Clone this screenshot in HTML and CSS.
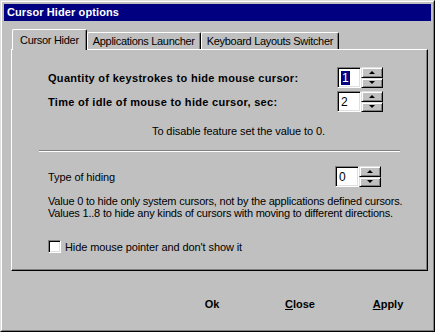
FILE: index.html
```html
<!DOCTYPE html>
<html lang="en">
<head>
  <meta charset="UTF-8">
  <meta name="viewport" content="width=device-width, initial-scale=1.0">
  <title>Cursor Hider options</title>
  <link rel="stylesheet" href="styles.css">
</head>
<body>
  <div class="window">
    <div class="frame">
      <div class="titlebar">Cursor Hider options</div>

      <div class="tabs">
        <div class="tab active">Cursor Hider</div>
        <div class="tab">Applications Launcher</div>
        <div class="tab">Keyboard Layouts Switcher</div>
      </div>

      <div class="panel">
        <div class="row bold">
          <span class="label">Quantity of keystrokes to hide mouse cursor:</span>
          <div class="spinner">
            <div class="edit"><span class="selected">1</span></div>
            <div class="spin">
              <div class="spin-btn"><span class="arrow up"></span></div>
              <div class="spin-btn"><span class="arrow down"></span></div>
            </div>
          </div>
        </div>
        <div class="row bold second">
          <span class="label">Time of idle of mouse to hide cursor, sec:</span>
          <div class="spinner">
            <div class="edit">2</div>
            <div class="spin">
              <div class="spin-btn"><span class="arrow up"></span></div>
              <div class="spin-btn"><span class="arrow down"></span></div>
            </div>
          </div>
        </div>

        <div class="note">To disable feature set the value to 0.</div>

        <div class="separator"></div>

        <div class="row type-row">
          <span class="label">Type of hiding</span>
          <div class="spinner shifted">
            <div class="edit">0</div>
            <div class="spin">
              <div class="spin-btn"><span class="arrow up"></span></div>
              <div class="spin-btn"><span class="arrow down"></span></div>
            </div>
          </div>
        </div>

        <div class="description">
          Value 0 to hide only system cursors, not by the applications defined cursors.<br>
          Values 1..8 to hide any kinds of cursors with moving to different directions.
        </div>

        <label class="check-row">
          <span class="checkbox"></span>
          <span>Hide mouse pointer and don't show it</span>
        </label>
      </div>

      <div class="buttons">
        <button class="btn">Ok</button>
        <button class="btn"><u>C</u>lose</button>
        <button class="btn"><u>A</u>pply</button>
      </div>
    </div>
  </div>
</body>
</html>
```

FILE: styles.css
```css
body {
  margin: 0;
  background: #c0c0c0;
  font-family: "Liberation Sans", Arial, sans-serif;
  font-size: 11px;
  color: #000;
}

.window {
  width: 435px;
  height: 332px;
  box-sizing: border-box;
  border: 1px solid;
  border-color: #dfdfdf #000 #000 #dfdfdf;
  background: #c0c0c0;
}

.frame {
  height: 100%;
  box-sizing: border-box;
  border: 1px solid;
  border-color: #fff #808080 #808080 #fff;
  padding: 2px;
  display: flex;
  flex-direction: column;
}

.titlebar {
  height: 17px;
  line-height: 17px;
  padding-left: 3px;
  background: #000080;
  color: #fff;
  font-weight: bold;
  letter-spacing: 0.1px;
}

/* tabs */
.tabs {
  display: flex;
  align-items: flex-end;
  height: 20px;
  margin: 8px 0 0 8px;
  position: relative;
  z-index: 1;
}

.tab {
  height: 17px;
  box-sizing: border-box;
  padding: 2px 5px 0 5px;
  border-top: 1px solid #fff;
  border-left: 1px solid #fff;
  border-right: 1px solid #000;
  box-shadow: inset -1px 0 #808080;
  border-radius: 2px 2px 0 0;
  letter-spacing: -0.3px;
  background: #c0c0c0;
}

.tab.active {
  height: 21px;
  padding: 4px 7px 0 7px;
  margin-bottom: -1px;
}

/* main panel */
.panel {
  height: 222px;
  box-sizing: border-box;
  margin: 0 3px 0 7px;
  padding: 17px 44px 0 36px;
  border: 1px solid;
  border-color: #fff #000 #000 #fff;
  box-shadow: inset -1px -1px #808080;
}

.row {
  display: flex;
  align-items: center;
  justify-content: space-between;
  height: 21px;
}

.row.bold {
  font-weight: bold;
  letter-spacing: 0.3px;
}

.row.second {
  margin-top: 3px;
}

.spinner {
  display: flex;
}

.spinner.shifted {
  margin-right: 2px;
}

.edit {
  width: 24px;
  height: 21px;
  box-sizing: border-box;
  padding: 3px 0 0 3px;
  border: 1px solid;
  border-color: #808080 #fff #fff #808080;
  box-shadow: inset 1px 1px #000, inset -1px -1px #dfdfdf;
  background: #fff;
  font-weight: normal;
  font-size: 12px;
  letter-spacing: 0;
}

.selected {
  background: #000080;
  color: #fff;
  padding: 0 1px;
}

.spin {
  width: 22px;
  display: flex;
  flex-direction: column;
}

.spin-btn {
  flex: 1;
  box-sizing: border-box;
  border: 1px solid;
  border-color: #dfdfdf #000 #000 #dfdfdf;
  box-shadow: inset 1px 1px #fff, inset -1px -1px #808080;
  background: #c0c0c0;
  display: flex;
  align-items: center;
  justify-content: center;
}

.arrow {
  width: 0;
  height: 0;
  border-left: 3px solid transparent;
  border-right: 3px solid transparent;
}

.arrow.up {
  border-bottom: 3px solid #000;
}

.arrow.down {
  border-top: 3px solid #000;
}

.note {
  margin: 13px 0 0 104px;
  line-height: 13px;
  letter-spacing: -0.1px;
}

.separator {
  margin: 12px -17px 0 -9px;
  border-top: 1px solid #808080;
  border-bottom: 1px solid #fff;
}

.type-row {
  margin-top: 14px;
  letter-spacing: -0.1px;
}

.description {
  margin-top: 8px;
  line-height: 12px;
  letter-spacing: -0.2px;
  white-space: nowrap;
}

.check-row {
  display: flex;
  align-items: center;
  gap: 4px;
  margin-top: 21px;
  letter-spacing: -0.1px;
}

.checkbox {
  width: 13px;
  height: 13px;
  box-sizing: border-box;
  border: 1px solid;
  border-color: #808080 #fff #fff #808080;
  box-shadow: inset 1px 1px #000, inset -1px -1px #dfdfdf;
  background: #fff;
}

/* bottom buttons */
.buttons {
  display: flex;
  justify-content: flex-end;
  gap: 8px;
  height: 23px;
  margin: 21px 3px 0 0;
}

.btn {
  width: 80px;
  padding: 0;
  border: none;
  background: transparent;
  font-family: inherit;
  font-size: 11px;
  font-weight: bold;
  color: #000;
}

.btn:focus {
  outline: none;
}
```
